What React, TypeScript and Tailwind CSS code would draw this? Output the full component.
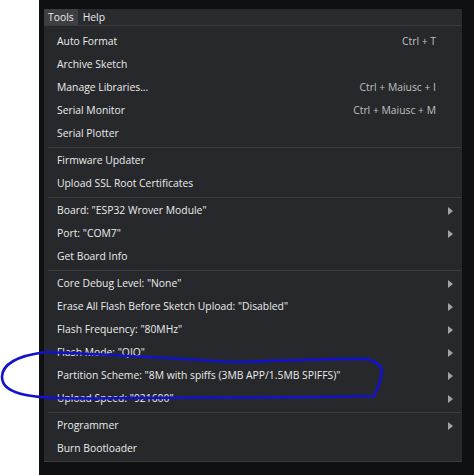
import React from "react";

type Item =
  | { kind: "item"; label: string; shortcut?: string; sub?: boolean }
  | { kind: "sep" };

const items: Item[] = [
  { kind: "item", label: "Auto Format", shortcut: "Ctrl + T" },
  { kind: "item", label: "Archive Sketch" },
  { kind: "item", label: "Manage Libraries...", shortcut: "Ctrl + Maiusc + I" },
  { kind: "item", label: "Serial Monitor", shortcut: "Ctrl + Maiusc + M" },
  { kind: "item", label: "Serial Plotter" },
  { kind: "sep" },
  { kind: "item", label: "Firmware Updater" },
  { kind: "item", label: "Upload SSL Root Certificates" },
  { kind: "sep" },
  { kind: "item", label: 'Board: "ESP32 Wrover Module"', sub: true },
  { kind: "item", label: 'Port: "COM7"', sub: true },
  { kind: "item", label: "Get Board Info" },
  { kind: "sep" },
  { kind: "item", label: 'Core Debug Level: "None"', sub: true },
  { kind: "item", label: 'Erase All Flash Before Sketch Upload: "Disabled"', sub: true },
  { kind: "item", label: 'Flash Frequency: "80MHz"', sub: true },
  { kind: "item", label: 'Flash Mode: "QIO"', sub: true },
  { kind: "item", label: 'Partition Scheme: "8M with spiffs (3MB APP/1.5MB SPIFFS)"', sub: true },
  { kind: "item", label: 'Upload Speed: "921600"', sub: true },
  { kind: "sep" },
  { kind: "item", label: "Programmer", sub: true },
  { kind: "item", label: "Burn Bootloader" },
];

function Arrow() {
  return (
    <svg width="5" height="8" viewBox="0 0 5 8">
      <path d="M0 0 L5 4 L0 8 Z" fill="#a3a4a6" />
    </svg>
  );
}

export default function App() {
  return (
    <div
      className="relative flex w-[474px] h-[475px] overflow-hidden bg-white text-[10.35px] leading-none"
      style={{ fontFamily: '"Open Sans", "Noto Sans", sans-serif' }}
    >
      <div className="w-[39px] bg-white" />
      <div className="flex-1 flex flex-col bg-[#0f1011] pt-[9px] pl-[5px] pr-[12px]">
        {/* menu bar */}
        <div className="flex h-[17px] bg-[#2a2b2e] border-b border-[#3a3b3e] text-[#ececec]">
          <div className="flex items-center px-[4px] bg-[#3d3f43]">Tools</div>
          <div className="flex items-center px-[5px]">Help</div>
        </div>

        {/* dropdown */}
        <div className="flex flex-col bg-[#27282b] pt-[4px] pb-[1px] border-b border-[#3c3d40]">
          {items.map((it, i) =>
            it.kind === "sep" ? (
              <div key={i} className="flex items-center h-[4px] pl-[4px]">
                <div className="h-px w-full bg-[#3b3c3f]" />
              </div>
            ) : (
              <div key={i} className="flex items-center h-[23px] pl-[13px] pr-[9px] text-[#ececec]">
                <span className="flex-1 whitespace-nowrap">{it.label}</span>
                {it.shortcut && <span className="text-[#bfc0c2] whitespace-nowrap">{it.shortcut}</span>}
                <span className="flex justify-end w-[17px]">{it.sub && <Arrow />}</span>
              </div>
            )
          )}
        </div>
      </div>

      {/* hand-drawn annotation */}
      <svg className="absolute inset-0 pointer-events-none" width="474" height="475" viewBox="0 0 474 475">
        <path
          d="M46 352 C80 353 150 357 235 362 C285 361 330 358 366 359 C376 361 381 365 382 371 C381 381 377 390 374 396 C300 398 200 397 120 398 C80 399 45 399 26 395 C10 392 2 386 2 377 C2 366 14 356 46 352"
          fill="none"
          stroke="#1212cc"
          strokeWidth="2.6"
          strokeLinecap="round"
          strokeLinejoin="round"
        />
      </svg>
    </div>
  );
}
